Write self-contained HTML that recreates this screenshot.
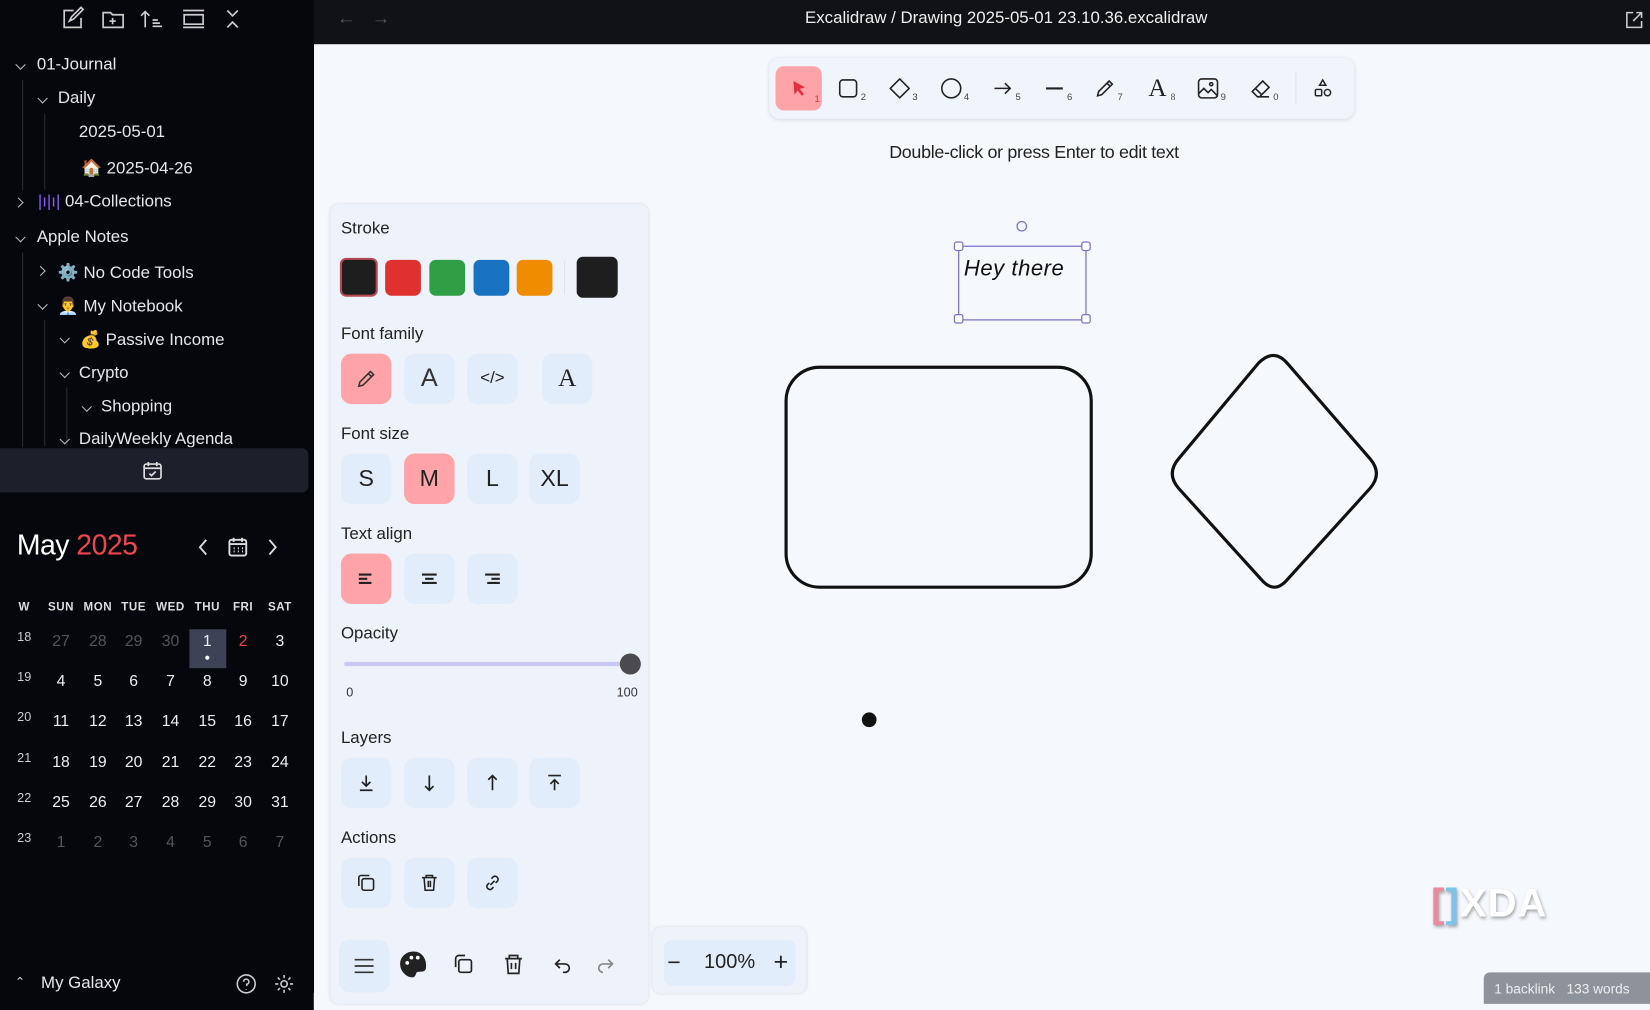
<!DOCTYPE html>
<html><head><meta charset="utf-8">
<style>
*{box-sizing:border-box;margin:0;padding:0}
html,body{width:1650px;height:993px;overflow:hidden;background:linear-gradient(90deg,#06070d 0,#06070d 314px,#f5f8fd 314px);font-family:"Liberation Sans","Noto Sans CJK SC",sans-serif}
#w{position:absolute;left:0;top:0;width:1568px;height:944px;transform:scale(1.05230);transform-origin:0 0}
.a{position:absolute}
#side{left:0;top:0;width:298px;height:960px;background:#06070d;color:#e8e8ea}
.tr{position:absolute;font-size:16px;color:#e6e6ea;white-space:nowrap}
.chev{position:absolute;width:7px;height:7px;border-right:1.6px solid #bbb;border-bottom:1.6px solid #bbb}
.down{transform:rotate(45deg)}
.right{transform:rotate(-45deg)}
.vl{position:absolute;width:1px;background:#2a2b33}
.cal{position:absolute;font-size:15px;color:#eee;width:30px;text-align:center}
.hd{font-size:11px;font-weight:bold;letter-spacing:.5px;color:#ddd}
.dim{color:#555}
.red{color:#f0444f}
.wk{font-size:12px;color:#ccc}
#top{left:298px;top:0;width:1270px;height:42px;background:#111215}
#panel{left:314px;top:194px;width:302px;height:760px;background:#eef3fb;border-radius:8px;box-shadow:0 0 3px rgba(0,0,0,.12)}
.lbl{position:absolute;font-size:16px;color:#222}
.btn{position:absolute;width:48px;height:48px;border-radius:10px;background:#e2edfb;display:flex;align-items:center;justify-content:center;color:#222;font-size:22px}
.act{background:#fea3a8}
.sw{position:absolute;width:34px;height:34px;border-radius:6px;top:247px}
#tb{left:731px;top:55px;width:556px;height:58px;background:#f0f4fb;border-radius:10px;box-shadow:0 1px 4px rgba(0,0,0,.12)}
.ti{position:absolute;top:10px;width:38px;height:38px;display:flex;align-items:center;justify-content:center}
.sub{position:absolute;font-size:9px;color:#444;bottom:6px;right:2px}
</style></head><body><div id="w">
<div class="a" id="side">
 <svg class="a" style="left:56px;top:6px" width="180" height="24" viewBox="0 0 180 24" fill="none" stroke="#ccc" stroke-width="1.6">
  <path d="M14 4H5v16h16v-9M10 14l2-4 9-9 2 2-9 9z"/>
  <path d="M42 6h7l2 2h10v12H42zM51 11v6M48 14h6"/>
  <path d="M82 20V5M78 9l4-4 4 4M89 13h5M89 16h7M89 19h9"/>
  <path d="M118 4h20M118 20h20M119 8h18v9h-18z"/>
  <path d="M160 4l5 5 5-5M160 20l5-5 5 5"/>
 </svg>
 <div class="chev down" style="left:16px;top:58px"></div><div class="tr" style="left:35px;top:53px">01-Journal</div>
 <div class="vl" style="left:21px;top:76px;height:105px"></div>
 <div class="chev down" style="left:37px;top:90px"></div><div class="tr" style="left:55px;top:85px">Daily</div>
 <div class="vl" style="left:42px;top:108px;height:72px"></div>
 <div class="tr" style="left:75px;top:117px">2025-05-01</div>
 <div class="tr" style="left:77px;top:150px">🏠 2025-04-26</div>
 <div class="chev right" style="left:14px;top:189px"></div><div class="tr" style="left:36px;top:183px"><span style="color:#8a5cf0">|ı|ı|</span> 04-Collections</div>
 <div class="chev down" style="left:16px;top:222px"></div><div class="tr" style="left:35px;top:217px">Apple Notes</div>
 <div class="vl" style="left:21px;top:240px;height:185px"></div>
 <div class="chev right" style="left:35px;top:254px"></div><div class="tr" style="left:55px;top:249px">⚙️ No Code Tools</div>
 <div class="chev down" style="left:37px;top:286px"></div><div class="tr" style="left:55px;top:281px">👨‍💼 My Notebook</div>
 <div class="vl" style="left:42px;top:304px;height:120px"></div>
 <div class="chev down" style="left:58px;top:318px"></div><div class="tr" style="left:76px;top:313px">💰 Passive Income</div>
 <div class="chev down" style="left:58px;top:351px"></div><div class="tr" style="left:75px;top:346px">Crypto</div>
 <div class="vl" style="left:63px;top:368px;height:56px"></div>
 <div class="chev down" style="left:79px;top:383px"></div><div class="tr" style="left:96px;top:378px">Shopping</div>
 <div class="chev down" style="left:58px;top:414px"></div><div class="tr" style="left:75px;top:409px;height:16px;overflow:hidden">DailyWeekly Agenda</div>
 <div class="a" style="left:0;top:426px;width:293px;height:42px;background:#1d1f2b;border-radius:0 6px 6px 0"></div>
 <svg class="a" style="left:135px;top:437px" width="20" height="20" viewBox="0 0 20 20" fill="none" stroke="#ddd" stroke-width="1.6"><rect x="2" y="4" width="16" height="14" rx="2"/><path d="M2 8h16M6 2v4M14 2v4M7 13l2 2 4-4"/></svg>
 <div class="a" style="left:16px;top:503px;font-size:27px;color:#fff;letter-spacing:-.5px">May <span style="color:#f0444f">2025</span></div>
 <svg class="a" style="left:183px;top:508px" width="90" height="24" viewBox="0 0 90 24" fill="none" stroke="#ddd" stroke-width="1.8"><path d="M13 5l-6 7 6 7"/><rect x="35" y="5" width="16" height="15" rx="2"/><path d="M35 9h16M39 3v4M47 3v4M39 13h1M43 13h1M47 13h1M39 16h1M43 16h1M47 16h1"/><path d="M73 5l6 7-6 7"/></svg>
 <div class="a" style="left:180px;top:598px;width:35px;height:37px;background:#3d4257"></div>
 <div class="a" style="left:195px;top:623px;width:4px;height:4px;border-radius:2px;background:#fff"></div>
 <div id="cal"></div>
 <div class="a" style="left:14px;top:926px;font-size:12px;color:#ccc">⌃</div>
 <div class="tr" style="left:39px;top:926px">My Galaxy</div>
 <svg class="a" style="left:224px;top:925px" width="60" height="20" viewBox="0 0 60 20" fill="none" stroke="#ccc" stroke-width="1.5"><circle cx="10" cy="10" r="8.5"/><path d="M7.5 8a2.5 2.5 0 1 1 3 2.4V12M10 15v.5"/><circle cx="46" cy="10" r="3"/><path d="M46 1.5v3M46 15.5v3M37.5 10h3M51.5 10h3M40 4l2 2M50 14l2 2M40 16l2-2M50 6l2-2"/></svg>
</div>
<div class="a" id="top">
 <div class="a" style="left:22px;top:7px;font-size:18px;color:#555">←&nbsp;&nbsp;&nbsp;→</div>
 <div class="a" style="left:467px;top:9px;font-size:16px;color:#eee">Excalidraw / Drawing 2025-05-01 23.10.36.excalidraw</div>
 <svg class="a" style="left:1246px;top:10px" width="18" height="18" viewBox="0 0 18 18" fill="none" stroke="#ccc" stroke-width="1.5"><path d="M8 2H2v14h14v-6M11 2h5v5M16 2L8 10"/></svg>
</div>
<div class="a" id="tb">
 <div class="ti" style="left:6px;background:#fea3a8;border-radius:8px;width:44px;height:42px;top:8px"><svg width="20" height="20" viewBox="0 0 20 20"><path d="M5 3l11 6-5 1.5 4 5-2 1.5-4-5-3 4z" fill="#e0303f"/></svg><span class="sub" style="color:#e0303f">1</span></div>
 <div class="ti" style="left:56px"><svg width="20" height="20" fill="none" stroke="#222" stroke-width="1.5"><rect x="2" y="2" width="16" height="16" rx="3"/></svg><span class="sub">2</span></div>
 <div class="ti" style="left:105px"><svg width="22" height="22" fill="none" stroke="#222" stroke-width="1.5"><path d="M11 2l9 9-9 9-9-9z" stroke-linejoin="round"/></svg><span class="sub">3</span></div>
 <div class="ti" style="left:154px"><svg width="22" height="22" fill="none" stroke="#222" stroke-width="1.5"><circle cx="11" cy="11" r="9"/></svg><span class="sub">4</span></div>
 <div class="ti" style="left:203px"><svg width="20" height="20" fill="none" stroke="#222" stroke-width="1.5"><path d="M2 10h15M12 5l5 5-5 5"/></svg><span class="sub">5</span></div>
 <div class="ti" style="left:252px"><svg width="20" height="20" fill="none" stroke="#222" stroke-width="2"><path d="M2 10h16"/></svg><span class="sub">6</span></div>
 <div class="ti" style="left:300px"><svg width="20" height="20" fill="none" stroke="#222" stroke-width="1.5"><path d="M3 17l1-4L14 3l3 3L7 16zM12 5l3 3"/></svg><span class="sub">7</span></div>
 <div class="ti" style="left:350px;font-family:'Liberation Serif',serif;font-size:24px;color:#222">A<span class="sub">8</span></div>
 <div class="ti" style="left:398px"><svg width="22" height="22" fill="none" stroke="#222" stroke-width="1.5"><rect x="2" y="2" width="18" height="18" rx="3"/><path d="M2 16l5-5 4 4 3-3 6 6"/><circle cx="14" cy="7" r="1.5"/></svg><span class="sub">9</span></div>
 <div class="ti" style="left:448px"><svg width="22" height="22" fill="none" stroke="#222" stroke-width="1.5"><path d="M8 19L3 14 13 4l6 6-9 9zM6 11l6 6M8 19h11"/></svg><span class="sub">0</span></div>
 <div class="a" style="left:500px;top:14px;width:1px;height:30px;background:#dde3ec"></div>
 <div class="ti" style="left:507px"><svg width="20" height="20" fill="none" stroke="#222" stroke-width="1.4"><path d="M10 2l3 5H7z"/><rect x="3" y="11" width="6" height="6" rx="1"/><circle cx="14.5" cy="14" r="3"/></svg></div>
</div>
<div class="a" style="left:845px;top:135px;font-size:17px;color:#222;letter-spacing:-.3px">Double-click or press Enter to edit text</div>
<svg class="a" style="left:740px;top:205px" width="580" height="360" viewBox="740 205 580 360" fill="none">
 <circle cx="971" cy="215" r="4.5" stroke="#7c72c8" stroke-width="1.2"/>
 <rect x="911" y="234" width="121" height="70" stroke="#7c72c8" stroke-width="1.2"/>
 <g fill="#fff" stroke="#7c72c8" stroke-width="1.2"><rect x="907" y="230" width="8" height="8" rx="2"/><rect x="1028" y="230" width="8" height="8" rx="2"/><rect x="907" y="299" width="8" height="8" rx="2"/><rect x="1028" y="299" width="8" height="8" rx="2"/></g>
 <text x="916" y="262" font-family="'Liberation Sans',sans-serif" font-size="21" fill="#111" font-style="italic" letter-spacing="0.5">Hey there</text>
 <rect x="747" y="349" width="290" height="209" rx="32" stroke="#111" stroke-width="3"/>
 <path d="M1196 345Q1211 330 1224 346L1302 436Q1314 450 1302 464L1224 550Q1211 566 1198 550L1120 464Q1108 450 1120 436Z" stroke="#111" stroke-width="3"/>
</svg>
<div class="a" style="left:819px;top:677px;width:14px;height:14px;border-radius:7px;background:#111"></div>
<div class="a" id="panel">
 <div class="lbl" style="left:10px;top:15px">Stroke</div>
 <div class="lbl" style="left:10px;top:115px">Font family</div>
 <div class="lbl" style="left:10px;top:210px">Font size</div>
 <div class="lbl" style="left:10px;top:305px">Text align</div>
 <div class="lbl" style="left:10px;top:400px">Opacity</div>
 <div class="lbl" style="left:10px;top:499px">Layers</div>
 <div class="lbl" style="left:10px;top:594px">Actions</div>
</div>
<div class="sw" style="left:323px;top:245px;width:36px;height:37px;border:2px solid #b54a55;background:#1e1e1e;padding:0"></div>
<div class="sw" style="left:366px;background:#e03131"></div>
<div class="sw" style="left:408px;background:#2f9e44"></div>
<div class="sw" style="left:450px;background:#1971c2"></div>
<div class="sw" style="left:491px;background:#f08c00"></div>
<div class="a" style="left:536px;top:248px;width:1px;height:32px;background:#dde3ec"></div>
<div class="sw" style="left:548px;top:244px;width:39px;height:39px;background:#1e1e1e"></div>
<div class="btn act" style="left:324px;top:336px"><svg width="20" height="20" fill="none" stroke="#333" stroke-width="1.5"><path d="M3 17l1-4L14 3l3 3L7 16zM12 5l3 3"/></svg></div>
<div class="btn" style="left:384px;top:336px;font-size:24px;color:#333">A</div>
<div class="btn" style="left:444px;top:336px;font-size:16px">&lt;/&gt;</div>
<div class="btn" style="left:515px;top:336px;font-family:'Liberation Serif',serif;font-size:24px">A</div>
<div class="btn" style="left:324px;top:431px">S</div>
<div class="btn act" style="left:384px;top:431px">M</div>
<div class="btn" style="left:444px;top:431px">L</div>
<div class="btn" style="left:503px;top:431px">XL</div>
<div class="btn act" style="left:324px;top:526px"><svg width="20" height="20" stroke="#222" stroke-width="2"><path d="M3 6h12M3 10h8M3 14h12"/></svg></div>
<div class="btn" style="left:384px;top:526px"><svg width="20" height="20" stroke="#222" stroke-width="2"><path d="M3 6h14M6 10h8M3 14h14"/></svg></div>
<div class="btn" style="left:444px;top:526px"><svg width="20" height="20" stroke="#222" stroke-width="2"><path d="M3 6h14M9 10h8M5 14h12"/></svg></div>
<div class="a" style="left:327px;top:629px;width:270px;height:4px;border-radius:2px;background:#c9c8f3"></div>
<div class="a" style="left:589px;top:621px;width:20px;height:20px;border-radius:10px;background:#4a4a4f"></div>
<div class="a" style="left:329px;top:651px;font-size:12px;color:#333">0</div>
<div class="a" style="left:586px;top:651px;font-size:12px;color:#333">100</div>
<div class="btn" style="left:324px;top:720px"><svg width="20" height="20" fill="none" stroke="#222" stroke-width="1.6"><path d="M10 3v10M6 9l4 4 4-4M4 17h12"/></svg></div>
<div class="btn" style="left:384px;top:720px"><svg width="20" height="20" fill="none" stroke="#222" stroke-width="1.6"><path d="M10 3v14M6 13l4 4 4-4"/></svg></div>
<div class="btn" style="left:444px;top:720px"><svg width="20" height="20" fill="none" stroke="#222" stroke-width="1.6"><path d="M10 17V3M6 7l4-4 4 4"/></svg></div>
<div class="btn" style="left:503px;top:720px"><svg width="20" height="20" fill="none" stroke="#222" stroke-width="1.6"><path d="M4 3h12M10 17V7M6 11l4-4 4 4"/></svg></div>
<div class="btn" style="left:324px;top:815px"><svg width="20" height="20" fill="none" stroke="#222" stroke-width="1.5"><rect x="6" y="6" width="11" height="11" rx="2"/><path d="M13 3H5a2 2 0 0 0-2 2v8"/></svg></div>
<div class="btn" style="left:384px;top:815px"><svg width="20" height="20" fill="none" stroke="#222" stroke-width="1.5"><path d="M3 5h14M7 5V3h6v2M5 5l1 12h8l1-12M9 8v6M11 8v6"/></svg></div>
<div class="btn" style="left:444px;top:815px"><svg width="20" height="20" fill="none" stroke="#222" stroke-width="1.5"><path d="M8 12l4-4M9 6l2-2a3 3 0 0 1 4 4l-2 2M11 14l-2 2a3 3 0 0 1-4-4l2-2"/></svg></div>
<div class="btn" style="left:322px;top:893px;height:50px"><svg width="22" height="20" stroke="#333" stroke-width="1.6"><path d="M2 4h18M2 10h18M2 16h18"/></svg></div>
<svg class="a" style="left:380px;top:903px" width="230" height="28" viewBox="0 0 230 28" fill="none" stroke="#222" stroke-width="1.6">
 <path d="M13 2C6 2 1 7 1 13s5 12 11 12c3 0 2-4 4-5s7 1 8-3C25 8 20 2 13 2z" fill="#222"/>
 <circle cx="7" cy="12" r="1.8" fill="#fff" stroke="none"/><circle cx="11" cy="7" r="1.8" fill="#fff" stroke="none"/><circle cx="17" cy="7" r="1.8" fill="#fff" stroke="none"/>
 <rect x="56" y="9" width="12" height="12" rx="2"/><path d="M62 5h-6a3 3 0 0 0-3 3v8"/>
 <path d="M100 8h16M104 8V5h8v3M102 8l1 14h10l1-14M106 12v6M110 12v6"/>
 <path d="M152 9l-4 4 4 4M148 13h9a4 4 0 0 1 0 8h-2"/>
 <path d="M198 9l4 4-4 4M202 13h-9a4 4 0 0 0 0 8" stroke="#888"/>
</svg>
<div class="a" style="left:620px;top:881px;width:146px;height:63px;background:#eef3fb;border-radius:8px;box-shadow:0 0 3px rgba(0,0,0,.12)"></div>
<div class="a" style="left:631px;top:893px;width:125px;height:44px;background:#e2edfb;border-radius:8px"></div>
<div class="a" style="left:634px;top:902px;font-size:22px;color:#222">−</div>
<div class="a" style="left:669px;top:904px;font-size:19px;color:#222">100%</div>
<div class="a" style="left:735px;top:901px;font-size:24px;color:#222">+</div>
<div class="a" style="left:1360px;top:838px;font-size:38px;font-weight:bold;color:#fff;text-shadow:1px 2px 3px rgba(0,0,0,.35);letter-spacing:1px"><span style="color:#e98a9e">[</span><span style="color:#7dc3ec">]</span>XDA</div>
<div class="a" style="left:1410px;top:924px;width:170px;height:30px;background:#8e939b;border-radius:6px 0 0 0;color:#eee;font-size:13px;padding:8px 0 0 10px">1 backlink &nbsp; 133 words</div>
</div>
<script>
var c=document.getElementById('cal'),h='';
var xs=[23,58,93,127,162,197,231,266];
var hd=['W','SUN','MON','TUE','WED','THU','FRI','SAT'];
function put(t,x,y,cls){h+='<div class="cal '+cls+'" style="left:'+(x-15)+'px;top:'+y+'px">'+t+'</div>';}
hd.forEach(function(t,i){put(t,xs[i],571,'hd');});
var rows=[[18,'27','28','29','30','1','2','3'],[19,4,5,6,7,8,9,10],[20,11,12,13,14,15,16,17],[21,18,19,20,21,22,23,24],[22,25,26,27,28,29,30,31],[23,1,2,3,4,5,6,7]];
var ys=[601,639,677,716,754,792];
rows.forEach(function(r,ri){r.forEach(function(t,i){var cls='';if(i==0)cls='wk';else if((ri==0&&i<5)||ri==5)cls='dim';if(ri==0&&i==6)cls='red';put(t,xs[i],ys[ri]-(i==0?3:0),cls);});});
c.innerHTML=h;
</script>
</body></html>
